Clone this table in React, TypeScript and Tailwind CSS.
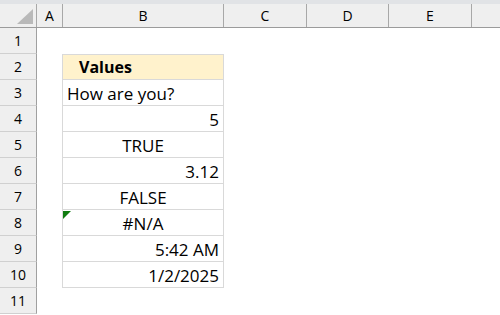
const cols = [
  { name: "A", w: "w-[26px]" },
  { name: "B", w: "w-[161px]" },
  { name: "C", w: "w-[83px]" },
  { name: "D", w: "w-[82px]" },
  { name: "E", w: "w-[83px]" },
];

type Cell = { text: string; align: "left" | "right" | "center"; bold?: boolean; header?: boolean; error?: boolean };

const values: (Cell | null)[] = [
  null,
  { text: "Values", align: "left", bold: true, header: true },
  { text: "How are you?", align: "left" },
  { text: "5", align: "right" },
  { text: "TRUE", align: "center" },
  { text: "3.12", align: "right" },
  { text: "FALSE", align: "center" },
  { text: "#N/A", align: "center", error: true },
  { text: "5:42 AM", align: "right" },
  { text: "1/2/2025", align: "right" },
  null,
];

export default function App() {
  return (
    <div
      className="w-[500px] h-[315px] bg-white overflow-hidden text-black"
      style={{ fontFamily: '"Open Sans", "Liberation Sans", sans-serif' }}
    >
      <div className="h-[4px] bg-[#e1e3e6]" />
      {/* Column headers */}
      <div className="flex h-[24px] bg-[#efefef] border-b border-[#9b9b9b]">
        <div className="w-[37px] shrink-0 relative border-r border-[#a8a8a8]">
          <div className="absolute right-[3px] bottom-[3px] w-0 h-0 border-l-[16px] border-l-transparent border-b-[15px] border-b-[#b9b9b9]" />
        </div>
        {cols.map((c) => (
          <div
            key={c.name}
            className={`${c.w} shrink-0 flex items-center justify-center text-[14px] border-r border-[#a8a8a8]`}
          >
            {c.name}
          </div>
        ))}
        <div className="flex-1" />
      </div>

      {/* Rows */}
      {values.map((cell, i) => {
        const last = i === 9;
        return (
          <div key={i} className="flex h-[26px]">
            <div className="w-[37px] shrink-0 bg-[#efefef] border-r border-[#a0a0a0] border-b border-b-[#d0d0d0] flex items-center justify-center text-[14px]">
              {i + 1}
            </div>
            <div className="w-[25px] shrink-0" />
            {cell ? (
              <div
                className={`w-[162px] shrink-0 relative flex items-end pb-[3px] px-[4px] leading-[17px] border-x border-[#d9d9d9] ${
                  last ? "border-b" : ""
                } ${cell.header ? "bg-[#fff2cc] border-t border-t-[#d9d9d9] pl-[16px] text-[16px]" : "text-[17px]"} ${
                  cell.align === "right" ? "justify-end" : cell.align === "center" ? "justify-center" : "justify-start"
                } ${cell.bold ? "font-bold" : ""} border-b border-b-[#d9d9d9]`}
              >
                {cell.error && (
                  <div className="absolute left-0 top-[1px] w-0 h-0 border-t-[8px] border-t-[#107c10] border-r-[8px] border-r-transparent" />
                )}
                {cell.text}
              </div>
            ) : (
              <div className="w-[162px] shrink-0" />
            )}
            <div className="flex-1" />
          </div>
        );
      })}
    </div>
  );
}
